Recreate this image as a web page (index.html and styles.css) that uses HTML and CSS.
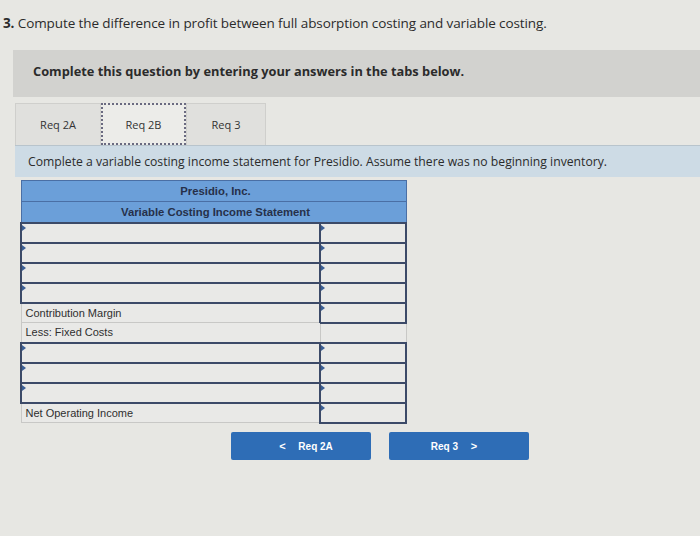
FILE: index.html
```html
<!DOCTYPE html>
<html>
<head>
<meta charset="utf-8">
<link rel="stylesheet" href="styles.css">
</head>
<body>
<div class="page">
  <p class="q-title"><b>3.</b> Compute the difference in profit between full absorption costing and variable costing.</p>
  <div class="instr">Complete this question by entering your answers in the tabs below.</div>
  <div class="tabs">
    <div class="tab">Req 2A</div>
    <div class="tab active">Req 2B</div>
    <div class="tab">Req 3</div>
  </div>
  <div class="prompt">Complete a variable costing income statement for Presidio. Assume there was no beginning inventory.</div>
  <table class="stmt">
    <tr class="hdr"><td colspan="2">Presidio, Inc.</td></tr>
    <tr class="hdr"><td colspan="2">Variable Costing Income Statement</td></tr>
    <tr><td class="inp"></td><td class="inp amt"></td></tr>
    <tr><td class="inp"></td><td class="inp amt"></td></tr>
    <tr><td class="inp"></td><td class="inp amt"></td></tr>
    <tr><td class="inp"></td><td class="inp amt"></td></tr>
    <tr><td class="lbl">Contribution Margin</td><td class="inp amt"></td></tr>
    <tr><td class="lbl">Less: Fixed Costs</td><td class="lbl amt"></td></tr>
    <tr><td class="inp"></td><td class="inp amt"></td></tr>
    <tr><td class="inp"></td><td class="inp amt"></td></tr>
    <tr><td class="inp"></td><td class="inp amt"></td></tr>
    <tr><td class="lbl">Net Operating Income</td><td class="inp amt"></td></tr>
  </table>
  <div class="nav">
    <button class="btn"><span class="chev">&lt;</span> Req 2A</button>
    <button class="btn">Req 3 <span class="chev">&gt;</span></button>
  </div>
</div>
</body>
</html>
```
FILE: styles.css
```css
html, body {
  margin: 0;
  padding: 0;
  background: #e7e7e3;
}
.page {
  width: 700px;
  height: 536px;
  overflow: hidden;
  font-family: "Open Sans", "Liberation Sans", sans-serif;
  color: #2a2a2a;
}
.q-title {
  margin: 0;
  padding: 14px 0 0 3px;
  font-size: 13.5px;
  line-height: 18px;
  letter-spacing: -0.1px;
  color: #2b2b2b;
}
.q-title b {
  font-weight: 700;
}
.instr {
  margin: 18px 0 0 13px;
  height: 47px;
  background: #d2d2cf;
  box-sizing: border-box;
  padding: 12px 0 0 20px;
  font-size: 12.8px;
  font-weight: 700;
  color: #2b2b2b;
}
.tabs {
  display: flex;
  margin: 6px 0 0 15px;
  height: 42px;
}
.tab {
  box-sizing: border-box;
  width: 86px;
  display: flex;
  align-items: center;
  justify-content: center;
  font-size: 11px;
  color: #333;
  background: #e0e0dd;
  border: 1px solid #cfcfcc;
  border-bottom: none;
}
.tab.active {
  background: #ecece9;
  border: 2px dotted #6a6a80;
  width: 85px;
}
.tab:last-child {
  width: 80px;
}
.prompt {
  margin: 0 0 0 15px;
  height: 32px;
  box-sizing: border-box;
  padding: 7px 0 0 13px;
  background: #cddbe5;
  border-top: 1px solid #b8c4cc;
  font-size: 12.2px;
  color: #2b2b2b;
}
.stmt {
  margin: 3px 0 0 20px;
  border-collapse: collapse;
  width: 387px;
  font-family: "Liberation Sans", Arial, sans-serif;
  font-size: 11px;
}
.stmt td {
  height: 16px;
  padding: 0 0 0 4px;
  box-sizing: border-box;
  background: #e9e9e7;
  position: relative;
}
.stmt .hdr td {
  background: #6b9fd9;
  text-align: center;
  font-weight: 700;
  font-size: 11.3px;
  color: #26304a;
  height: 21px;
  border: 1px solid #4a6fa5;
}
.stmt td.inp {
  border: 2px solid #3c4a68;
  height: 20px;
}
.stmt td.inp::before {
  content: "";
  position: absolute;
  left: 0;
  top: 1px;
  border-left: 4px solid #3b5e94;
  border-top: 3px solid transparent;
  border-bottom: 3px solid transparent;
}
.stmt td.lbl {
  border: 1px solid #c8c8c6;
  height: 20px;
  color: #2f2f2f;
}
.stmt td.amt {
  width: 86px;
}
.nav {
  display: flex;
  gap: 18px;
  margin: 8px 0 0 231px;
}
.btn {
  width: 140px;
  height: 28px;
  border: none;
  border-radius: 2px;
  background: #2e6db6;
  color: #fff;
  font-family: "Liberation Sans", Arial, sans-serif;
  font-weight: 700;
  font-size: 10px;
}
.chev {
  font-size: 11px;
  margin: 0 10px;
}
```
